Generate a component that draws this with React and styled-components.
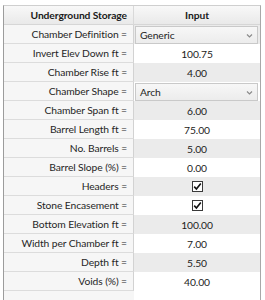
import React from "react";
import styled, { createGlobalStyle } from "styled-components";

const Global = createGlobalStyle`
  html, body { margin: 0; padding: 0; background: #ffffff; }
  body { font-family: Lato, "Noto Sans", sans-serif; color: #1e1e1e; }
`;

const Page = styled.div`
  padding: 5px 4px 0 3px;
  height: 300px;
  box-sizing: border-box;
  overflow: hidden;
`;

const Grid = styled.div`
  display: grid;
  grid-template-columns: 130px 1fr;
  grid-auto-rows: 19px;
  border-left: 1px solid #9c9c9c;
  border-right: 1px solid #a8a8a8;
  border-top: 1px solid #cfcfcf;
  height: 320px;
  background: linear-gradient(to right, #f6f6f6 0, #f6f6f6 130px, #ffffff 130px);
  font-size: 10.3px;
  letter-spacing: -0.1px;
`;

const HeadCell = styled.div`
  height: 19px;
  box-sizing: border-box;
  display: flex;
  align-items: center;
  justify-content: ${(p) => (p.$center ? "center" : "flex-end")};
  padding-right: ${(p) => (p.$center ? "0" : "6px")};
  font-weight: 700;
  color: #1a1a1a;
  background: linear-gradient(#f8f8f8, #e9e9e9);
  border-bottom: 1px solid #d6d6d6;
  border-right: ${(p) => (p.$center ? "none" : "1px solid #d9d9d9")};
`;

const Label = styled.div`
  box-sizing: border-box;
  display: flex;
  align-items: center;
  justify-content: flex-end;
  padding-right: 6px;
  background: #f6f6f6;
  border-bottom: 1px solid #dcdcdc;
  border-right: 1px solid #d2d2d2;
  color: #262626;
  white-space: nowrap;
`;

const Value = styled.div`
  box-sizing: border-box;
  display: flex;
  align-items: center;
  justify-content: center;
  background: ${(p) => (p.$shade ? "#ebebeb" : "#ffffff")};
  color: #1a1a1a;
`;

const SelectCell = styled.div`
  box-sizing: border-box;
  padding: 1px 2px 0 1px;
  background: ${(p) => (p.$shade ? "#ebebeb" : "#ffffff")};
  display: flex;
`;

const SelectBox = styled.div`
  flex: 1;
  box-sizing: border-box;
  border: 1px solid #c9c9c9;
  background: linear-gradient(#f7f7f7, #ececec);
  display: flex;
  align-items: center;
  justify-content: space-between;
  padding: 0 4px 0 4px;
`;

const Chevron = styled.svg`
  width: 7px;
  height: 5px;
`;

const Check = styled.div`
  width: 11px;
  height: 11px;
  box-sizing: border-box;
  border: 1px solid #3a3a3a;
  background: #ffffff;
  display: flex;
  align-items: center;
  justify-content: center;
`;

const rows = [
  { label: "Chamber Definition =", type: "select", value: "Generic" },
  { label: "Invert Elev Down ft =", value: "100.75" },
  { label: "Chamber Rise ft =", value: "4.00" },
  { label: "Chamber Shape =", type: "select", value: "Arch" },
  { label: "Chamber Span ft =", value: "6.00" },
  { label: "Barrel Length ft =", value: "75.00" },
  { label: "No. Barrels =", value: "5.00" },
  { label: "Barrel Slope (%) =", value: "0.00" },
  { label: "Headers =", type: "check" },
  { label: "Stone Encasement =", type: "check" },
  { label: "Bottom Elevation ft =", value: "100.00" },
  { label: "Width per Chamber ft =", value: "7.00" },
  { label: "Depth ft =", value: "5.50" },
  { label: "Voids (%) =", value: "40.00" },
];

function Cell({ row, shade }) {
  if (row.type === "select") {
    return (
      <SelectCell $shade={shade}>
        <SelectBox>
          <span>{row.value}</span>
          <Chevron viewBox="0 0 7 5">
            <path d="M1 1.5 L3.5 4 L6 1.5" fill="none" stroke="#8a8a8a" strokeWidth="1.2" />
          </Chevron>
        </SelectBox>
      </SelectCell>
    );
  }
  if (row.type === "check") {
    return (
      <Value $shade={shade}>
        <Check>
          <svg width="9" height="9" viewBox="0 0 9 9">
            <path d="M1.2 4.6 L3.4 7 L7.8 1.4" fill="none" stroke="#111" strokeWidth="1.6" />
          </svg>
        </Check>
      </Value>
    );
  }
  return <Value $shade={shade}>{row.value}</Value>;
}

export default function App() {
  return (
    <Page>
      <Global />
      <Grid>
        <HeadCell>Underground Storage</HeadCell>
        <HeadCell $center>Input</HeadCell>
        {rows.map((r, i) => (
          <React.Fragment key={r.label}>
            <Label>{r.label}</Label>
            <Cell row={r} shade={i % 2 === 0} />
          </React.Fragment>
        ))}
      </Grid>
    </Page>
  );
}
